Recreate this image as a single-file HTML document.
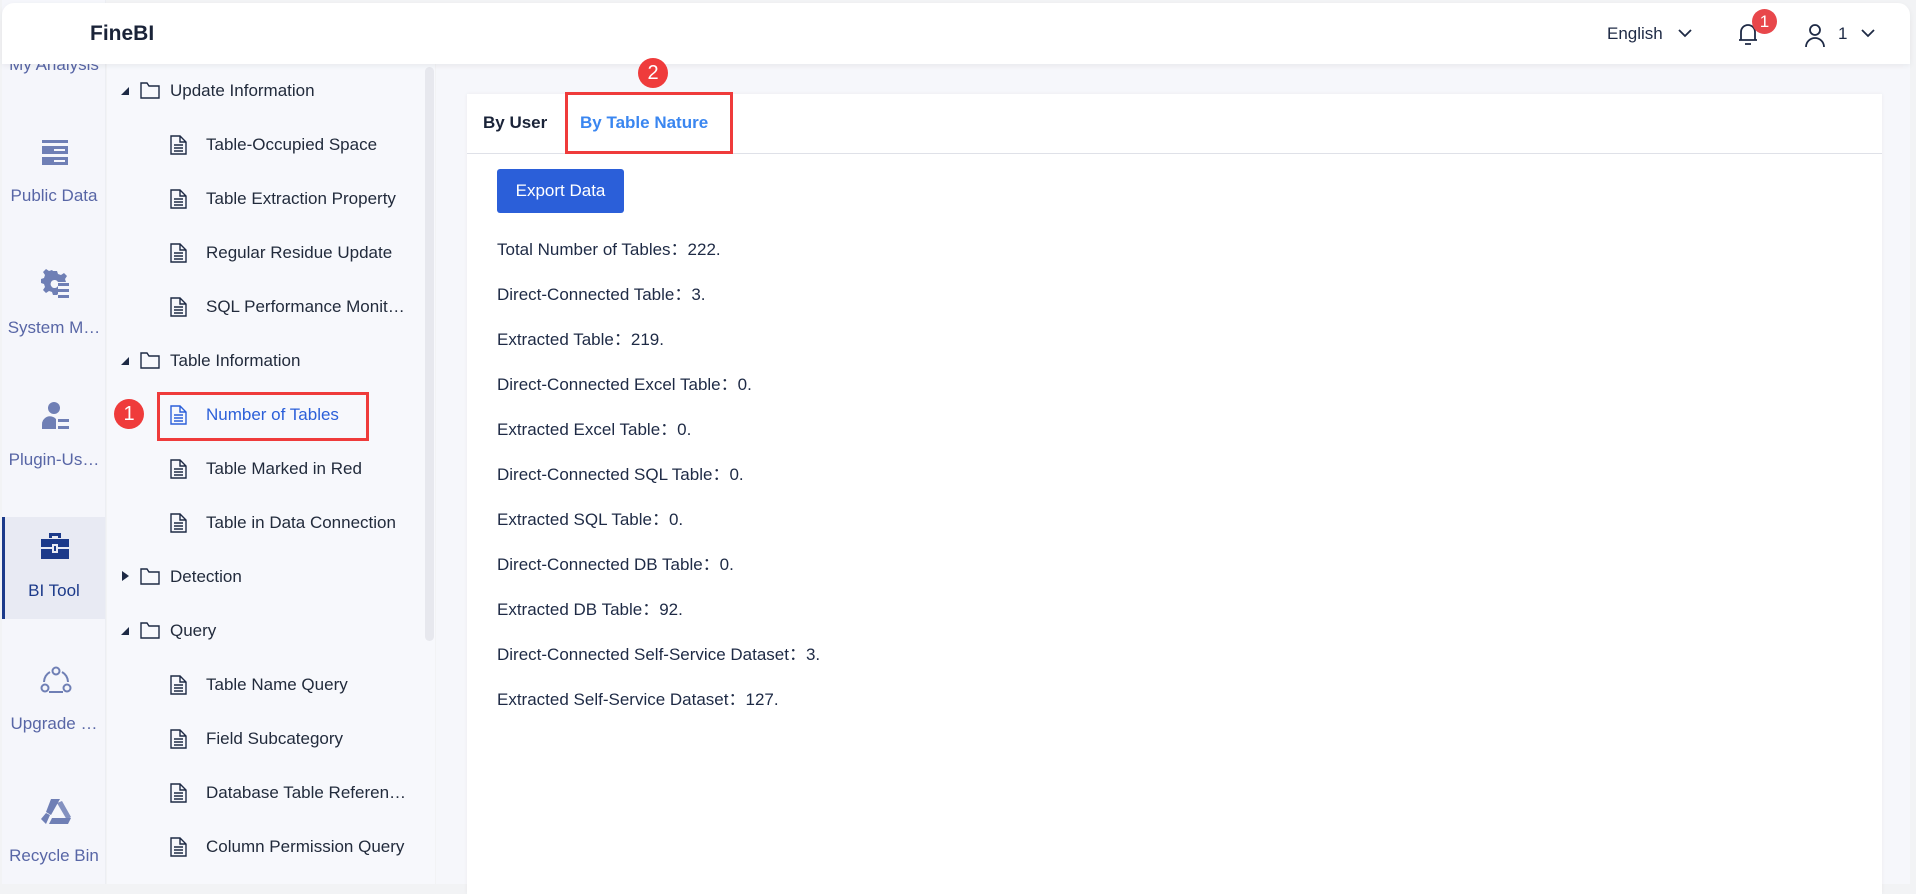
<!DOCTYPE html>
<html><head><meta charset="utf-8"><style>
*{margin:0;padding:0;box-sizing:border-box}
body{width:1916px;height:884px;overflow:hidden;background:#f2f3f5;font-family:"Liberation Sans",Arial,"Noto Sans CJK SC",sans-serif;position:relative}
.hdr{position:absolute;left:2px;top:3px;width:1908px;height:61px;background:#fff;border-radius:12px 12px 0 0;box-shadow:0 2px 6px rgba(0,0,0,.06);z-index:5}
.logo{position:absolute;left:88px;top:19px;font-size:21px;font-weight:bold;color:#1a2338}
.side{position:absolute;left:2px;top:0;width:104px;height:884px;background:#f5f6fb;border-right:1px solid #eceef3;overflow:hidden}
.si{position:absolute;left:0;width:104px;height:102px;text-align:center;color:#5866a6;font-size:17px}
.si svg{position:absolute;left:38px;top:4px}
.si span{position:absolute;left:0;width:104px;top:53px;white-space:nowrap;overflow:hidden}
.si.act{background:#e8eaf3;border-left:3px solid #1c3a8a;color:#1c3a8a}
.si.act svg{left:35px;top:14px}
.si.act span{left:-3px;top:64px}
.tree{position:absolute;left:107px;top:64px;width:328px;height:820px;background:#f7f8fc}
.row{position:absolute;font-size:17px;color:#222b3c;white-space:nowrap}
.sb{position:absolute;left:425px;top:67px;width:9px;height:574px;background:#e7e8ee;border-radius:5px}
.main{position:absolute;left:436px;top:64px;width:1474px;height:820px;background:#f6f7fb}
.card{position:absolute;left:467px;top:94px;width:1415px;height:800px;background:#fff;box-shadow:0 0 4px rgba(0,0,0,.05)}
.tabs{position:absolute;left:0;top:0;width:1415px;height:60px;border-bottom:1px solid #dfe1e8}
.txt{position:absolute;left:30px;font-size:17px;color:#1e2a45;white-space:nowrap}
.badge{position:absolute;width:30px;height:30px;border-radius:50%;background:#ef3b3b;color:#fff;font-size:20px;text-align:center;line-height:30px}
</style></head><body>
<div class="side">
 <div class="si" style="top:2px"><span>My Analysis</span></div>
 <div class="si" style="top:133px"><svg width="30" height="30"><rect x="2" y="3" width="26" height="3" fill="#6f7fb5"/><rect x="2" y="9" width="26" height="8" fill="#6f7fb5"/><rect x="14" y="12" width="11" height="2" fill="#f5f6fb"/><rect x="2" y="20" width="26" height="8" fill="#6f7fb5"/><rect x="14" y="23" width="11" height="2" fill="#f5f6fb"/></svg><span>Public Data</span></div>
 <div class="si" style="top:265px"><svg width="30" height="30"><path d="M13 2h4l1 3 3 1 3-2 3 3-2 3 1 3h-8a4 4 0 1 0 0 4h0v8l-1 1h-4l-1-3-3-1-3 2-3-3 2-3-1-3-3-1v-4l3-1 1-3-2-3 3-3 3 2 3-1z" fill="#6f7fb5"/><rect x="18" y="14" width="11" height="3" fill="#6f7fb5"/><rect x="18" y="20" width="11" height="3" fill="#6f7fb5"/><rect x="18" y="26" width="11" height="3" fill="#6f7fb5"/></svg><span>System M…</span></div>
 <div class="si" style="top:397px"><svg width="30" height="30"><circle cx="14" cy="7" r="6" fill="#6f7fb5"/><path d="M2 28v-4a8 8 0 0 1 14-6v10z" fill="#6f7fb5"/><rect x="18" y="18" width="11" height="3" fill="#6f7fb5"/><rect x="18" y="25" width="11" height="3" fill="#6f7fb5"/></svg><span>Plugin-Us…</span></div>
 <div class="si act" style="top:517px"><svg width="30" height="30"><path d="M9 2h12v5h-3V5h-6v2H9z" fill="#1c3a8a"/><rect x="1" y="8" width="28" height="8" fill="#1c3a8a"/><rect x="1" y="18" width="28" height="10" fill="#1c3a8a"/><rect x="12" y="13" width="6" height="9" fill="#e8eaf3"/><rect x="14" y="15" width="2" height="5" fill="#1c3a8a"/></svg><span>BI Tool</span></div>
 <div class="si" style="top:661px"><svg width="32" height="32"><circle cx="16" cy="6" r="3.5" fill="none" stroke="#6f7fb5" stroke-width="2"/><circle cx="5" cy="23" r="3.5" fill="none" stroke="#6f7fb5" stroke-width="2"/><circle cx="27" cy="23" r="3.5" fill="none" stroke="#6f7fb5" stroke-width="2"/><path d="M10 7a12 12 0 0 0-6 10M22 7a12 12 0 0 1 6 10M9 27h14" fill="none" stroke="#6f7fb5" stroke-width="2"/></svg><span>Upgrade …</span></div>
 <div class="si" style="top:793px"><svg width="32" height="30"><path d="M11 2h9l-9 16-5-3z" fill="#6f7fb5"/><path d="M22 4l9 16-4 3-10-17z" fill="#6f7fb5" opacity=".85"/><path d="M1 22l5-6 4 2-4 9z M12 21h19l-3 6H9z" fill="#6f7fb5"/></svg><span>Recycle Bin</span></div>
</div>

<div class="hdr">
 <div class="logo">FineBI</div>
 <div style="position:absolute;left:1605px;top:21px;font-size:17px;color:#1e2a45">English</div>
 <svg style="position:absolute;left:1675px;top:24px" width="16" height="12"><path d="M2 3l6 6 6-6" fill="none" stroke="#1e2a45" stroke-width="1.8"/></svg>
 <svg style="position:absolute;left:1735px;top:18px" width="22" height="26"><path d="M4 19V11a7 7 0 0 1 14 0v8M2 19h18M8 23h6" fill="none" stroke="#1e2a45" stroke-width="1.8"/></svg>
 <div class="badge" style="left:1750px;top:6px;width:25px;height:25px;line-height:25px;font-size:17px;background:#e8474b">1</div>
 <svg style="position:absolute;left:1802px;top:20px" width="22" height="24"><circle cx="11" cy="7" r="5" fill="none" stroke="#1e2a45" stroke-width="1.8"/><path d="M2 24a9 9 0 0 1 18 0" fill="none" stroke="#1e2a45" stroke-width="1.8"/></svg>
 <div style="position:absolute;left:1836px;top:21px;font-size:17px;color:#1e2a45">1</div>
 <svg style="position:absolute;left:1858px;top:24px" width="16" height="12"><path d="M2 3l6 6 6-6" fill="none" stroke="#1e2a45" stroke-width="1.8"/></svg>
</div>

<div class="tree"></div>
<div class="sb"></div>

<div class="main"></div>
<div class="card">
 <div class="tabs">
  <div style="position:absolute;left:16px;top:19px;font-size:17px;font-weight:bold;color:#1a2338">By User</div>
  <div style="position:absolute;left:113px;top:19px;font-size:17px;font-weight:bold;color:#3a86f0">By Table Nature</div>
 </div>
 <div style="position:absolute;left:30px;top:75px;width:127px;height:44px;background:#2b5fd9;border-radius:3px;color:#fff;font-size:17px;line-height:44px;text-align:center">Export Data</div>
 <div class="txt" style="top:141px">Total Number of Tables：222.</div>
 <div class="txt" style="top:186px">Direct-Connected Table：3.</div>
 <div class="txt" style="top:231px">Extracted Table：219.</div>
 <div class="txt" style="top:276px">Direct-Connected Excel Table：0.</div>
 <div class="txt" style="top:321px">Extracted Excel Table：0.</div>
 <div class="txt" style="top:366px">Direct-Connected SQL Table：0.</div>
 <div class="txt" style="top:411px">Extracted SQL Table：0.</div>
 <div class="txt" style="top:456px">Direct-Connected DB Table：0.</div>
 <div class="txt" style="top:501px">Extracted DB Table：92.</div>
 <div class="txt" style="top:546px">Direct-Connected Self-Service Dataset：3.</div>
 <div class="txt" style="top:591px">Extracted Self-Service Dataset：127.</div>
</div>

<div style="position:absolute;left:0;top:0">
 <svg style="position:absolute;left:121px;top:86px" width="10" height="10"><path d="M8 1v8H0z" fill="#1e2a45"/></svg>
 <svg style="position:absolute;left:140px;top:82px" width="20" height="17"><path d="M1 1h6l2 3h10v12H1z" fill="none" stroke="#1e2a45" stroke-width="1.4"/></svg>
 <div class="row" style="left:170px;top:81px">Update Information</div>

 <svg style="position:absolute;left:121px;top:356px" width="10" height="10"><path d="M8 1v8H0z" fill="#1e2a45"/></svg>
 <svg style="position:absolute;left:140px;top:352px" width="20" height="17"><path d="M1 1h6l2 3h10v12H1z" fill="none" stroke="#1e2a45" stroke-width="1.4"/></svg>
 <div class="row" style="left:170px;top:351px">Table Information</div>

 <svg style="position:absolute;left:121px;top:570px" width="10" height="12"><path d="M1 1l7 5-7 5z" fill="#1e2a45"/></svg>
 <svg style="position:absolute;left:140px;top:568px" width="20" height="17"><path d="M1 1h6l2 3h10v12H1z" fill="none" stroke="#1e2a45" stroke-width="1.4"/></svg>
 <div class="row" style="left:170px;top:567px">Detection</div>

 <svg style="position:absolute;left:121px;top:626px" width="10" height="10"><path d="M8 1v8H0z" fill="#1e2a45"/></svg>
 <svg style="position:absolute;left:140px;top:622px" width="20" height="17"><path d="M1 1h6l2 3h10v12H1z" fill="none" stroke="#1e2a45" stroke-width="1.4"/></svg>
 <div class="row" style="left:170px;top:621px">Query</div>

 <svg style="position:absolute;left:169px;top:135px" width="20" height="20"><path d="M2 1h9l6 6v12H2z M11 1v6h6 M5 10h9 M5 13h9 M5 16h9" fill="none" stroke="#1e2a45" stroke-width="1.4"/></svg>
 <div class="row" style="left:206px;top:135px">Table-Occupied Space</div>
 <svg style="position:absolute;left:169px;top:189px" width="20" height="20"><path d="M2 1h9l6 6v12H2z M11 1v6h6 M5 10h9 M5 13h9 M5 16h9" fill="none" stroke="#1e2a45" stroke-width="1.4"/></svg>
 <div class="row" style="left:206px;top:189px">Table Extraction Property</div>
 <svg style="position:absolute;left:169px;top:243px" width="20" height="20"><path d="M2 1h9l6 6v12H2z M11 1v6h6 M5 10h9 M5 13h9 M5 16h9" fill="none" stroke="#1e2a45" stroke-width="1.4"/></svg>
 <div class="row" style="left:206px;top:243px">Regular Residue Update</div>
 <svg style="position:absolute;left:169px;top:297px" width="20" height="20"><path d="M2 1h9l6 6v12H2z M11 1v6h6 M5 10h9 M5 13h9 M5 16h9" fill="none" stroke="#1e2a45" stroke-width="1.4"/></svg>
 <div class="row" style="left:206px;top:297px">SQL Performance Monit…</div>
 <svg style="position:absolute;left:169px;top:405px" width="20" height="20"><path d="M2 1h9l6 6v12H2z M11 1v6h6 M5 10h9 M5 13h9 M5 16h9" fill="none" stroke="#2b5fd9" stroke-width="1.4"/></svg>
 <div class="row" style="left:206px;top:405px;color:#2b5fd9">Number of Tables</div>
 <svg style="position:absolute;left:169px;top:459px" width="20" height="20"><path d="M2 1h9l6 6v12H2z M11 1v6h6 M5 10h9 M5 13h9 M5 16h9" fill="none" stroke="#1e2a45" stroke-width="1.4"/></svg>
 <div class="row" style="left:206px;top:459px">Table Marked in Red</div>
 <svg style="position:absolute;left:169px;top:513px" width="20" height="20"><path d="M2 1h9l6 6v12H2z M11 1v6h6 M5 10h9 M5 13h9 M5 16h9" fill="none" stroke="#1e2a45" stroke-width="1.4"/></svg>
 <div class="row" style="left:206px;top:513px">Table in Data Connection</div>
 <svg style="position:absolute;left:169px;top:675px" width="20" height="20"><path d="M2 1h9l6 6v12H2z M11 1v6h6 M5 10h9 M5 13h9 M5 16h9" fill="none" stroke="#1e2a45" stroke-width="1.4"/></svg>
 <div class="row" style="left:206px;top:675px">Table Name Query</div>
 <svg style="position:absolute;left:169px;top:729px" width="20" height="20"><path d="M2 1h9l6 6v12H2z M11 1v6h6 M5 10h9 M5 13h9 M5 16h9" fill="none" stroke="#1e2a45" stroke-width="1.4"/></svg>
 <div class="row" style="left:206px;top:729px">Field Subcategory</div>
 <svg style="position:absolute;left:169px;top:783px" width="20" height="20"><path d="M2 1h9l6 6v12H2z M11 1v6h6 M5 10h9 M5 13h9 M5 16h9" fill="none" stroke="#1e2a45" stroke-width="1.4"/></svg>
 <div class="row" style="left:206px;top:783px">Database Table Referen…</div>
 <svg style="position:absolute;left:169px;top:837px" width="20" height="20"><path d="M2 1h9l6 6v12H2z M11 1v6h6 M5 10h9 M5 13h9 M5 16h9" fill="none" stroke="#1e2a45" stroke-width="1.4"/></svg>
 <div class="row" style="left:206px;top:837px">Column Permission Query</div>

 <div style="position:absolute;left:157px;top:392px;width:212px;height:49px;border:3px solid #ef3b3b"></div>
 <div class="badge" style="left:114px;top:399px">1</div>
 <div style="position:absolute;left:565px;top:92px;width:168px;height:62px;border:3px solid #ef3b3b;z-index:6"></div>
 <div class="badge" style="left:638px;top:58px;z-index:6">2</div>
</div>
</body></html>
